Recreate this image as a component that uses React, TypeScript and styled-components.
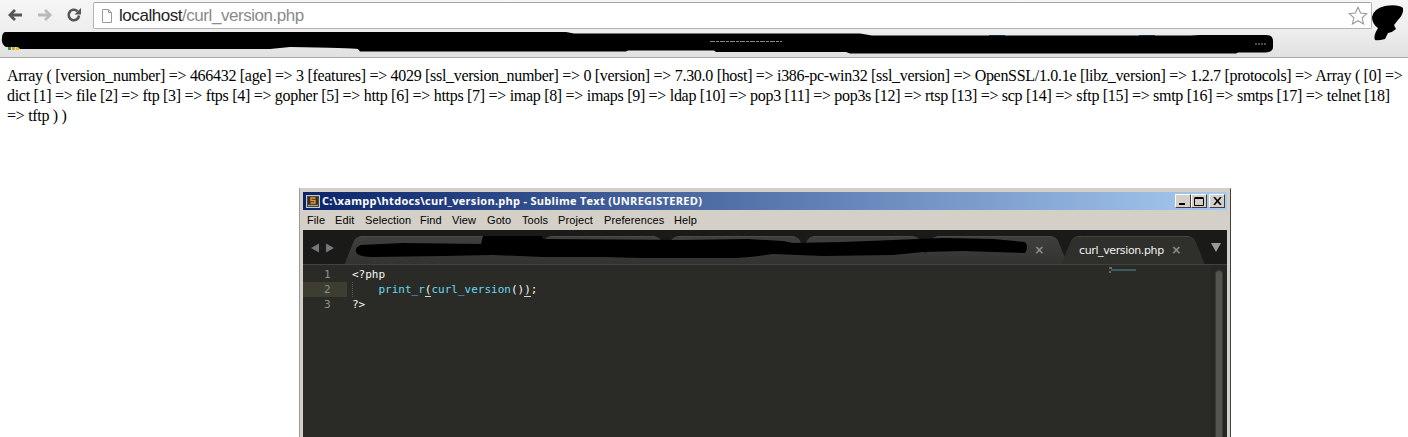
import React from "react";
import styled, { createGlobalStyle } from "styled-components";

const Global = createGlobalStyle`
  html, body { margin: 0; padding: 0; background: #fff; overflow: hidden; }
  #root { width: 1408px; height: 437px; overflow: hidden; }
`;

const Page = styled.div`
  position: relative;
  width: 1408px;
  height: 437px;
  overflow: hidden;
  background: #fff;
`;

/* ---------- browser chrome ---------- */
const Chrome = styled.header`
  position: relative;
  height: 58px;
  box-sizing: border-box;
  border-bottom: 1px solid #a9a9a9;
  background: linear-gradient(#f6f6f6 0, #eeeeee 30px, #e0e0e0 57px);
`;
const Toolbar = styled.div`
  height: 30px;
  box-sizing: border-box;
  padding: 2px 36px 0 0;
  display: flex;
  align-items: flex-start;
`;
const NavButton = styled.button<{ $w: number }>`
  all: unset;
  width: ${(p) => p.$w}px;
  height: 26px;
  display: flex;
  align-items: center;
  justify-content: center;
`;
const Omnibox = styled.div`
  flex: 1;
  height: 27px;
  margin-left: 4px;
  box-sizing: border-box;
  border: 1px solid #b4b4b4;
  border-top-color: #a4a4a4;
  border-radius: 2px;
  background: #fff;
  display: flex;
  align-items: center;
  padding: 0 3px 0 7px;
  font: 17px/25px "Liberation Sans", Arial, sans-serif;
  letter-spacing: -0.45px;
`;
const Host = styled.span`
  color: #222;
  margin-left: 6px;
`;
const UrlPath = styled.span`
  color: #8a8a8a;
  flex: 1;
`;
const Scribble = styled.svg`
  position: absolute;
  left: 0;
  top: 0;
  pointer-events: none;
  z-index: 2;
`;

/* ---------- php output ---------- */
const Output = styled.p`
  margin: 0;
  padding: 8px 0 0 7px;
  height: 130px;
  box-sizing: border-box;
  font: 16px/20px "Liberation Serif", "Times New Roman", serif;
  letter-spacing: -0.3px;
  color: #000;
`;

/* ---------- sublime window ---------- */
const Win = styled.section`
  position: relative;
  margin-left: 299px;
  width: 932px;
  height: 250px;
  box-sizing: border-box;
  padding: 3px 3px 0;
  background: #d4d0c8;
  border: 1px solid #9a9a9a;
  border-bottom: 0;
  border-right-color: #404040;
  border-top-color: #d0d0d0;
  display: flex;
  flex-direction: column;
`;
const TitleBar = styled.div`
  height: 18px;
  flex: none;
  box-sizing: border-box;
  background: linear-gradient(90deg, #0a246a, #a6caf0);
  display: flex;
  align-items: center;
  padding: 0 2px 0 3px;
`;
const TitleText = styled.div`
  flex: 1;
  margin-left: 2px;
  color: #fff;
  white-space: nowrap;
  font: bold 11px/18px "Open Sans", "DejaVu Sans", sans-serif;
  letter-spacing: 0.29px;
`;
const WinButton = styled.div<{ $gap?: number }>`
  width: 16px;
  height: 14px;
  box-sizing: border-box;
  margin-left: ${(p) => p.$gap ?? 0}px;
  background: #d4d0c8;
  border: 1px solid;
  border-color: #fff #404040 #404040 #fff;
  display: flex;
  align-items: center;
  justify-content: center;
`;
const MenuBar = styled.nav`
  height: 20px;
  flex: none;
  display: flex;
  align-items: center;
  background: #d4d0c8;
  padding-left: 4px;
  font: 11px/20px "Liberation Sans", Tahoma, sans-serif;
  color: #000;
`;
const MenuItem = styled.span<{ $w: number }>`
  width: ${(p) => p.$w}px;
  flex: none;
  letter-spacing: 0.1px;
`;
const TabStrip = styled.div`
  position: relative;
  height: 34px;
  flex: none;
  box-sizing: border-box;
  background: #1a1a18;
  display: flex;
  align-items: flex-end;
  padding-left: 7px;
`;
const PagerArrows = styled.div`
  width: 46px;
  height: 28px;
  flex: none;
  display: flex;
  align-items: center;
  gap: 5px;
  margin-bottom: 2px;
`;
const Tab = styled.div<{ $w: number; $gap: number; $active?: boolean }>`
  position: relative;
  width: ${(p) => p.$w}px;
  height: 28px;
  flex: none;
  box-sizing: border-box;
  margin-left: ${(p) => p.$gap}px;
  border-radius: 8px 8px 0 0;
  border-top: 1px solid ${(p) => (p.$active ? "#454543" : "#4a4a48")};
  background: ${(p) => (p.$active ? "#2f302b" : "linear-gradient(#3f3f3d, #333431)")};
  color: #f0f0f0;
  font: 11px/24px "DejaVu Sans", sans-serif;
  display: flex;
  align-items: center;
  padding-left: 6px;
  letter-spacing: -0.38px;
  &::before, &::after {
    content: "";
    position: absolute;
    top: -1px;
    bottom: 0;
    width: 12px;
    background: inherit;
    border-top: inherit;
  }
  &::before {
    left: -6px;
    transform: skewX(-22deg);
    border-radius: 6px 0 0 0;
  }
  &::after {
    right: -6px;
    transform: skewX(22deg);
    border-radius: 0 6px 0 0;
  }
`;
const TabLabel = styled.span`
  position: relative;
  z-index: 1;
`;
const TabClose = styled.span<{ $right: number }>`
  position: absolute;
  right: ${(p) => p.$right}px;
  top: 7px;
  z-index: 1;
  color: #8e8e8c;
  font: bold 12px/12px "DejaVu Sans", sans-serif;
`;
const TabMenu = styled.div`
  position: absolute;
  right: 6px;
  top: 13px;
  width: 0;
  height: 0;
  border-left: 5px solid transparent;
  border-right: 5px solid transparent;
  border-top: 9px solid #9a9a98;
`;
const Editor = styled.div`
  position: relative;
  flex: 1;
  display: flex;
  background: #2a2b26;
  border-top: 1px solid #41423e;
`;
const Gutter = styled.div`
  width: 44px;
  flex: none;
  padding-top: 2px;
  font: 11px/15px "DejaVu Sans Mono", monospace;
  color: #8f908a;
`;
const LineNo = styled.div<{ $current?: boolean }>`
  height: 15px;
  box-sizing: border-box;
  padding-left: 21px;
  background: ${(p) => (p.$current ? "#3e3d32" : "transparent")};
`;
const Code = styled.pre`
  position: relative;
  margin: 0;
  flex: 1;
  padding: 2px 0 0 5px;
  font: 11px/15px "DejaVu Sans Mono", monospace;
  color: #f8f8f2;
`;
const Fn = styled.span`
  color: #66d9ef;
`;
const Bracket = styled.span`
  border-bottom: 1px solid #d8d8d2;
`;
const Guide = styled.span`
  position: absolute;
  left: 5px;
  top: 17px;
  height: 15px;
  border-left: 1px dotted #5a5a55;
`;
const Minimap = styled.svg`
  position: absolute;
  left: 806px;
  top: 2px;
`;
const ScrollTrack = styled.div`
  width: 16px;
  flex: none;
  box-sizing: border-box;
  padding: 5px 4px 0 4px;
  background: #262722;
`;
const ScrollThumb = styled.div`
  height: 100%;
  border-radius: 4px 4px 0 0;
  background: #55554f;
  border: 1px solid #3a3a36;
  border-bottom: 0;
  box-sizing: border-box;
`;

const Arrow = ({ dir, color }: { dir: "l" | "r"; color: string }) => (
  <svg width="16" height="14" viewBox="0 0 16 14" style={{ transform: dir === "r" ? "scaleX(-1)" : undefined }}>
    <path d="M1 7 L7 1 L9 3 L6.2 5.5 H15 V8.5 H6.2 L9 11 L7 13 Z" fill={color} />
  </svg>
);

const Reload = () => (
  <svg width="16" height="16" viewBox="0 0 16 16">
    <path d="M13 8.5 A5.2 5.2 0 1 1 11.4 4.2" fill="none" stroke="#555" strokeWidth="2.6" />
    <path d="M15 1 V7.5 H8.5 Z" fill="#555" />
  </svg>
);

const PageIcon = () => (
  <svg width="12" height="14" viewBox="0 0 12 14">
    <path d="M1.5 .5 H7.5 L10.5 3.5 V13.5 H1.5 Z M7.5 .5 V3.5 H10.5" fill="#fff" stroke="#9a9a9a" />
  </svg>
);

const Star = () => (
  <svg width="20" height="19" viewBox="0 0 20 19">
    <path d="M10 1.2 L12.6 7 L18.9 7.6 L14.1 11.8 L15.6 18 L10 14.7 L4.4 18 L5.9 11.8 L1.1 7.6 L7.4 7 Z" fill="#fff" stroke="#9a9a9a" strokeWidth="1.1" />
  </svg>
);

const SublimeIcon = () => (
  <svg width="14" height="13" viewBox="0 0 14 13">
    <rect x=".5" y=".5" width="13" height="12" fill="#4a4a46" stroke="#c8c8c0" />
    <rect x="2" y="2" width="10" height="7" fill="#332f2a" />
    <rect x="2" y="10" width="10" height="1" fill="#999" />
    <path d="M9.5 3 H5 V5.5 H9 V8 H4.5" fill="none" stroke="#f09a28" strokeWidth="1.3" />
  </svg>
);

const tabArrowLeft = (
  <svg width="10" height="10" viewBox="0 0 10 10"><path d="M9 .5 V9.5 L1 5 Z" fill="#77777a" /></svg>
);
const tabArrowRight = (
  <svg width="10" height="10" viewBox="0 0 10 10"><path d="M1 .5 V9.5 L9 5 Z" fill="#77777a" /></svg>
);

const output = `Array ( [version_number] => 466432 [age] => 3 [features] => 4029 [ssl_version_number] => 0 [version] => 7.30.0 [host] => i386-pc-win32 [ssl_version] => OpenSSL/1.0.1e [libz_version] => 1.2.7 [protocols] => Array ( [0] => dict [1] => file [2] => ftp [3] => ftps [4] => gopher [5] => http [6] => https [7] => imap [8] => imaps [9] => ldap [10] => pop3 [11] => pop3s [12] => rtsp [13] => scp [14] => sftp [15] => smtp [16] => smtps [17] => telnet [18] => tftp ) )`;

const menus: [string, number][] = [
  ["File", 28], ["Edit", 30], ["Selection", 55], ["Find", 32], ["View", 35],
  ["Goto", 35], ["Tools", 36], ["Project", 46], ["Preferences", 70], ["Help", 30],
];

const tabs: { w: number; gap: number; close?: number; label?: string; active?: boolean }[] = [
  { w: 180, gap: 0 },
  { w: 113, gap: 10 },
  { w: 125, gap: 14 },
  { w: 109, gap: 11 },
  { w: 123, gap: 15, close: 12 },
  { w: 120, gap: 17, close: 12, label: "curl_version.php", active: true },
];

export default function App() {
  return (
    <Page>
      <Global />
      <Chrome>
        <Toolbar>
          <NavButton $w={30}><Arrow dir="l" color="#555" /></NavButton>
          <NavButton $w={29}><Arrow dir="r" color="#b9b9b9" /></NavButton>
          <NavButton $w={30}><Reload /></NavButton>
          <Omnibox>
            <PageIcon />
            <Host>localhost</Host>
            <UrlPath>/curl_version.php</UrlPath>
            <Star />
          </Omnibox>
        </Toolbar>
        <Scribble width="1408" height="58" viewBox="0 0 1408 58">
          <rect x="8" y="47" width="3" height="3" fill="#3a9a3a" />
          <rect x="12" y="47" width="3" height="3" fill="#e8a020" />
          <rect x="16" y="47" width="3" height="3" fill="#e8c020" />
          <rect x="989" y="35" width="16" height="3" fill="#1f5a9a" />
          <rect x="1139" y="35" width="16" height="3" fill="#1f5a9a" />
          <path d="M5 32 H566 L574 33.5 H860 L872 35.5 H1190 L1200 35 H1266 Q1273 35 1273 41 V47 Q1273 52 1266 52.5 H1238 L1236 53.5 H850 L846 52 H716 L714 50.5 H628 L626 51.5 H360 L358 49 Q352 48 290 47 L270 49 H20 L18 47 H6 Q1 44 2 38 Q2 33 5 32 Z" fill="#000" />
          <path d="M1385 6 Q1398 4 1403 8 Q1404 14 1398 20 L1394 25 L1396 29 Q1393 32 1388 33 L1385 39 Q1378 41 1375 40 Q1373 36 1378 28 Q1372 24 1372 17 Q1373 9 1385 6 Z" fill="#000" />
          <path d="M710 41.5 H782" stroke="#8a8a8a" strokeWidth="1" strokeDasharray="5 1 3 1" />
          <path d="M1255 44 H1266" stroke="#9a9a9a" strokeWidth="1" strokeDasharray="2 1" />
        </Scribble>
      </Chrome>
      <Output>{output}</Output>
      <Win>
        <TitleBar>
          <SublimeIcon />
          <TitleText>C:\xampp\htdocs\curl_version.php - Sublime Text (UNREGISTERED)</TitleText>
          <WinButton>
            <svg width="8" height="8" viewBox="0 0 8 8"><rect x="0" y="6" width="6" height="2" fill="#000" /></svg>
          </WinButton>
          <WinButton>
            <svg width="10" height="9" viewBox="0 0 10 9"><path d="M.5 1.5 H9.5 V8.5 H.5 Z M.5 .5 H9.5" fill="none" stroke="#000" /></svg>
          </WinButton>
          <WinButton $gap={2}>
            <svg width="9" height="8" viewBox="0 0 9 8"><path d="M1 0 L8 8 M8 0 L1 8" stroke="#000" strokeWidth="1.6" /></svg>
          </WinButton>
        </TitleBar>
        <MenuBar>
          {menus.map(([m, w]) => (
            <MenuItem key={m} $w={w}>{m}</MenuItem>
          ))}
        </MenuBar>
        <TabStrip>
          <PagerArrows>{tabArrowLeft}{tabArrowRight}</PagerArrows>
          {tabs.map((t, i) => (
            <Tab key={i} $w={t.w} $gap={t.gap} $active={t.active}>
              {t.label && <TabLabel>{t.label}</TabLabel>}
              {t.close !== undefined && <TabClose $right={t.close}>×</TabClose>}
            </Tab>
          ))}
          <TabMenu />
          <Scribble width="926" height="34" viewBox="0 0 926 34">
            <path d="M58 15 Q52 17 53 22 Q55 27 70 27 L140 26 L190 25 L240 27 H300 L340 28 L432 28 Q442 28 470 24 L520 26 L590 25 L620 22 L660 21 L722 23 Q726 17 722 12 L690 9 L640 8 L590 10 L540 12 L490 13 L480 11 L445 9 L380 10 L240 9 L239 6 L180 6 L178 14 L100 13 Z" fill="#000" />
          </Scribble>
        </TabStrip>
        <Editor>
          <Gutter>
            <LineNo>1</LineNo>
            <LineNo $current>2</LineNo>
            <LineNo>3</LineNo>
          </Gutter>
          <Code>
            <Guide />
            {"<?php\n    "}
            <Fn>print_r</Fn>
            <Bracket>(</Bracket>
            <Fn>curl_version</Fn>
            {"()"}
            <Bracket>)</Bracket>
            {";\n?>"}
          </Code>
          <Minimap width="28" height="6" viewBox="0 0 28 6">
            <path d="M0 1 H3" stroke="#aaa" strokeWidth="1" />
            <path d="M2 3 H27" stroke="#4a8f9a" strokeWidth="1" />
            <path d="M0 5 H2" stroke="#aaa" strokeWidth="1" />
          </Minimap>
          <ScrollTrack><ScrollThumb /></ScrollTrack>
        </Editor>
      </Win>
    </Page>
  );
}
